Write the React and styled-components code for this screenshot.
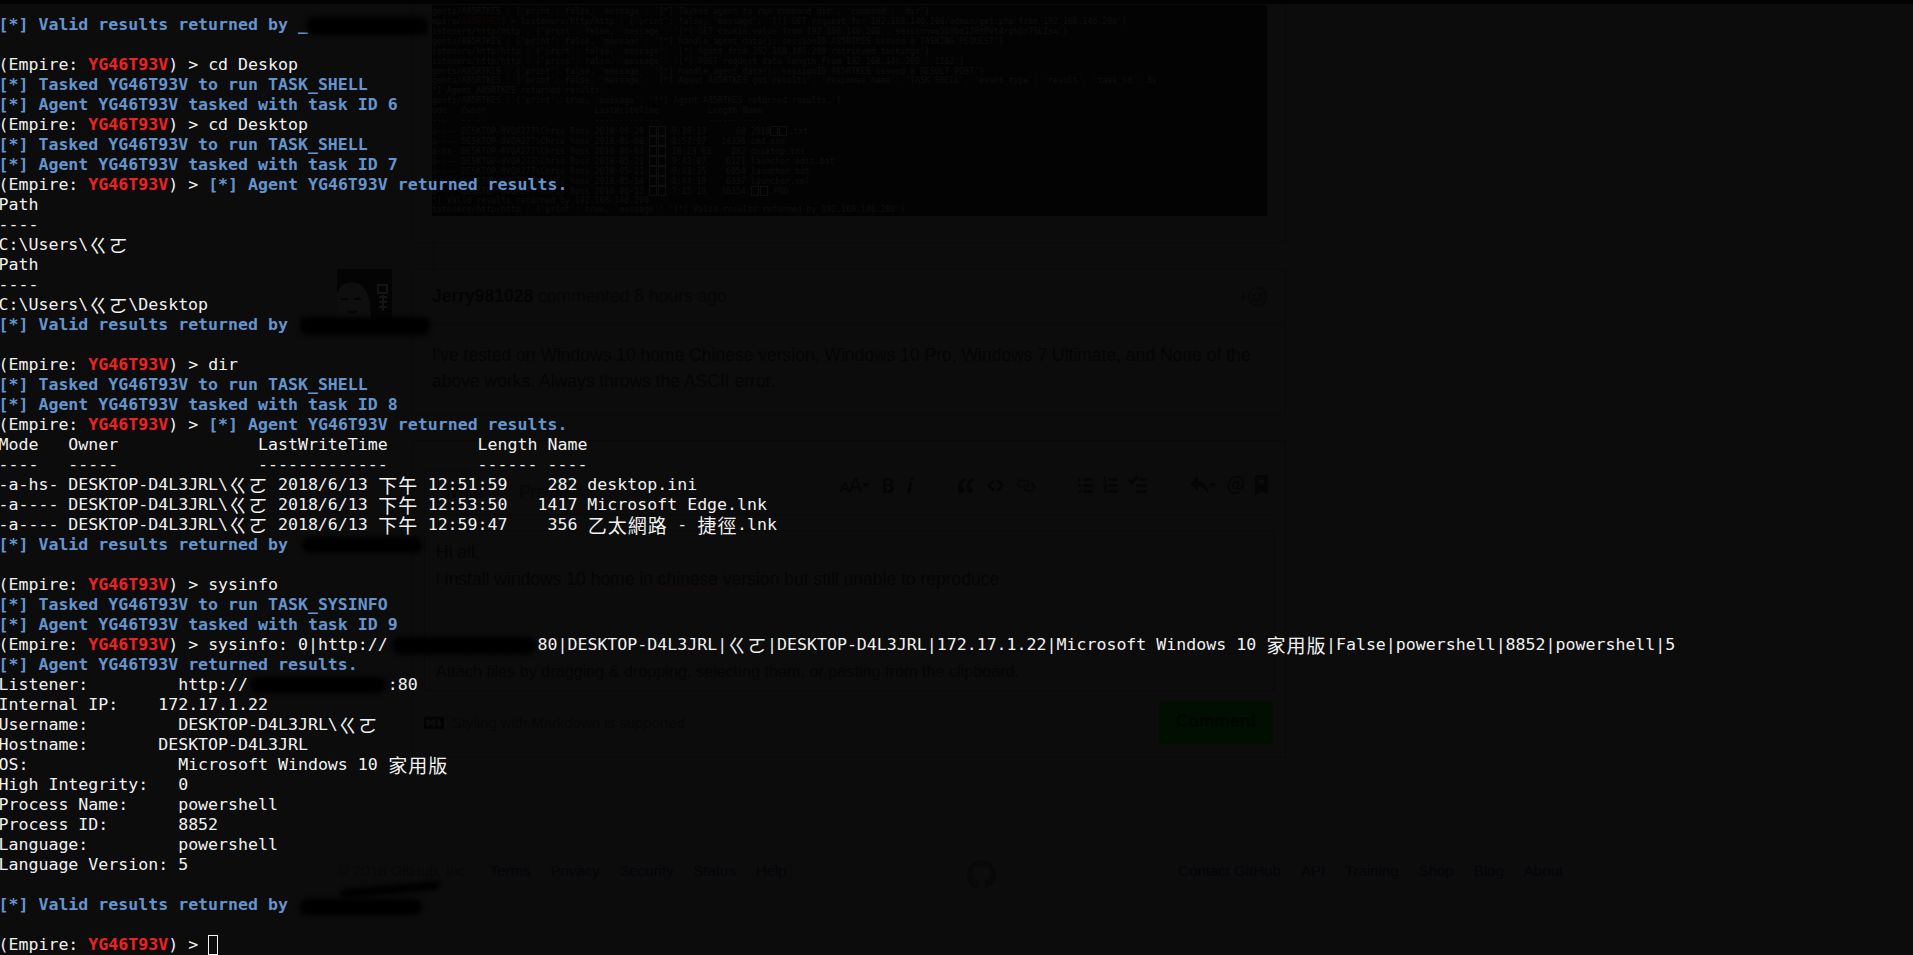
import React from "react";
import styled, { createGlobalStyle } from "styled-components";

const Global = createGlobalStyle`
  html, body { margin: 0; padding: 0; background: #0c0c0c; }
  #root { width: 1913px; height: 955px; overflow: hidden; }
`;

const Stage = styled.div`
  position: relative;
  width: 1913px;
  height: 955px;
  overflow: hidden;
  background: #0c0c0c;
  font-family: "Liberation Sans", Arial, sans-serif;
  color: #060606;
`;

/* ---------- dimmed GitHub page behind the terminal ---------- */
const Page = styled.div`
  display: flex;
  flex-direction: column;
  width: 950px;
  padding: 5px 0 0 337px;
`;
const TopStrip = styled.div`
  position: absolute;
  top: 0;
  left: 0;
  right: 0;
  height: 4px;
  background: #020202;
`;
const TopBox = styled.section`
  box-sizing: border-box;
  width: 874px;
  height: 238px;
  margin-left: 75px;
  padding: 0 18px 0 19px;
  border: 1px solid #090909;
  border-top: 0;
`;
const Shot = styled.div`
  width: 835px;
  height: 211px;
  overflow: hidden;
  background: #030303;
  padding-top: 2px;
  box-sizing: border-box;
`;
const ShotLine = styled.div`
  margin-left: -5px;
  height: 9.93px;
  white-space: pre;
  font: 8.2px/9.93px "DejaVu Sans Mono", monospace;
  color: #0f0f0f;
`;
const Tofu = styled.span`
  display: inline-block;
  box-sizing: border-box;
  width: 8px;
  height: 10px;
  margin-right: 1px;
  border: 1px solid #0f0f0f;
  vertical-align: -2px;
`;
const ShotRed = styled.span`
  color: #150303;
`;
const TimelineGap = styled.div`
  height: 26px;
  margin-left: 96px;
  border-left: 1px solid #090909;
`;
const CommentRow = styled.div`
  display: flex;
  gap: 20px;
`;
const AvatarBox = styled.div`
  width: 55px;
  height: 55px;
  flex: none;
`;
const Card = styled.article`
  box-sizing: border-box;
  width: 874px;
  height: 146px;
  border: 1px solid #090909;
`;
const CardHead = styled.header`
  box-sizing: border-box;
  height: 54px;
  padding: 0 18px 0 19px;
  display: flex;
  align-items: center;
  justify-content: space-between;
  border-bottom: 1px solid #090909;
  font-size: 17.5px;
  color: #070707;
`;
const Author = styled.strong`
  color: #040404;
`;
const Reaction = styled.div`
  display: flex;
  align-items: center;
  gap: 1px;
  color: #080808;
`;
const CardBody = styled.p`
  margin: 0;
  padding: 18px 19px 0;
  font-size: 17.5px;
  line-height: 26px;
  color: #050505;
`;
const FormFrame = styled.section`
  box-sizing: border-box;
  width: 874px;
  height: 318px;
  margin: 25px 0 0 75px;
  padding: 29px 10px 0 11px;
  border: 1px solid #090909;
`;
const TabBar = styled.div`
  box-sizing: border-box;
  height: 45px;
  display: flex;
  align-items: stretch;
  justify-content: space-between;
  border-bottom: 1px solid #090909;
`;
const Tabs = styled.div`
  display: flex;
`;
const Tab = styled.div`
  box-sizing: border-box;
  width: ${(p) => (p.$active ? "78px" : "96px")};
  display: flex;
  align-items: center;
  justify-content: center;
  font-size: 17.5px;
  color: #070707;
  border: ${(p) => (p.$active ? "1px solid #090909" : "0")};
  border-bottom: 0;
`;
const Toolbar = styled.div`
  display: flex;
  align-items: center;
  padding: 0 7px 14px 0;
  color: #050505;
`;
const ToolGroup = styled.div`
  display: flex;
  align-items: center;
  gap: ${(p) => p.$gap || 9}px;
  margin-left: ${(p) => p.$left || 0}px;
`;
const AaIcon = styled.span`
  display: inline-flex;
  align-items: baseline;
  font-size: 20px;
  letter-spacing: -1px;
`;
const SmallA = styled.span`
  font-size: 15px;
`;
const Caret = styled.span`
  width: 0;
  height: 0;
  margin: 0 0 0 1px;
  border: 4px solid transparent;
  border-top: 4px solid #050505;
  border-bottom: 0;
  align-self: center;
`;
const ToolItem = styled.span`
  display: inline-flex;
  align-items: center;
`;
const TextArea = styled.div`
  box-sizing: border-box;
  height: 122px;
  margin-top: 15px;
  padding: 8px 11px;
  border: 1px solid #090909;
  border-bottom: 0;
  font-size: 17.5px;
  line-height: 27px;
  color: #050505;
`;
const Misspelled = styled.span`
  text-decoration: underline wavy #1e0404 1px;
`;
const DropBar = styled.div`
  box-sizing: border-box;
  height: 39px;
  padding: 0 11px;
  display: flex;
  align-items: center;
  border: 1px solid #090909;
  border-top: 1px dashed #0a0a0a;
  border-radius: 0 0 3px 3px;
  font-size: 16.2px;
  color: #060606;
`;
const Actions = styled.div`
  display: flex;
  align-items: center;
  justify-content: space-between;
  margin-top: 11px;
  padding-right: 2px;
`;
const Note = styled.div`
  display: flex;
  align-items: center;
  gap: 8px;
  font-size: 14.9px;
  color: #070707;
`;
const NoteIcon = styled.span`
  display: inline-flex;
  color: #030303;
`;
const CommentButton = styled.div`
  box-sizing: border-box;
  width: 114px;
  height: 42px;
  padding-bottom: 4px;
  display: flex;
  align-items: center;
  justify-content: center;
  border-radius: 3px;
  background: #000f00;
  font-size: 17.5px;
  font-weight: 700;
  color: #030603;
`;
const Footer = styled.footer`
  width: 1225px;
  height: 30px;
  margin: 101px 0 0 1px;
  display: grid;
  grid-template-columns: 629px auto 1fr;
  align-items: center;
  font-size: 15px;
  color: #05050b;
`;
const FootLeft = styled.div`
  display: flex;
  gap: 19.8px;
  margin-bottom: 7px;
`;
const FootRight = styled.div`
  display: flex;
  justify-content: flex-end;
  gap: 20px;
  margin-bottom: 7px;
`;
const FootCopy = styled.span`
  color: #080808;
`;
const FootLogo = styled.span`
  display: inline-flex;
  color: #080808;
`;

/* ---------- the terminal on top ---------- */
const Terminal = styled.div`
  position: absolute;
  top: 15px;
  left: -1.5px;
  font-family: "DejaVu Sans Mono", "Liberation Mono", monospace;
  font-size: 16.58px;
  color: #f2f2f2;
`;
const Line = styled.div`
  height: 20px;
  line-height: 20px;
  white-space: pre;
`;
const Info = styled.span`
  color: #6595cd;
  font-weight: 700;
`;
const Red = styled.span`
  color: #ee2222;
  font-weight: 700;
`;
const Wide = styled.span`
  display: inline-block;
  width: 19.96px;
  text-align: center;
  font-family: "Noto Sans CJK TC", "Noto Sans CJK JP", sans-serif;
  font-size: 19px;
  line-height: 20px;
  height: 20px;
  vertical-align: top;
`;
const Cursor = styled.span`
  display: inline-block;
  width: 10px;
  height: 20px;
  border: 1px solid #f2f2f2;
  box-sizing: border-box;
  vertical-align: top;
`;
const Redaction = styled.div.attrs((p) => ({
  style: {
    left: p.$x,
    top: p.$y,
    width: p.$w,
    height: p.$h,
    transform: p.$tilt ? `rotate(${p.$tilt}deg)` : undefined,
  },
}))`
  position: absolute;
  background: #000;
  border-radius: 8px;
  filter: blur(2.5px);
`;

/* ---------- drawings ---------- */
const Oct = ({ w, h, vb, d }) => (
  <svg width={w} height={h} viewBox={vb} fill="currentColor" aria-hidden="true">
    <path fillRule="evenodd" d={d} />
  </svg>
);
const P = {
  bold: "M1 2h3.83c2.48 0 4.3.75 4.3 2.95 0 1.14-.63 2.23-1.67 2.61v.06c1.33.3 2.3 1.23 2.3 2.86 0 2.39-1.97 3.52-4.61 3.52H1V2zm3.66 4.95c1.67 0 2.38-.66 2.38-1.69 0-1.17-.78-1.61-2.34-1.61H3.13v3.3h1.53zm.27 5.39c1.77 0 2.75-.64 2.75-1.98 0-1.27-.95-1.81-2.75-1.81h-1.8v3.8h1.8v-.01z",
  italic: "M2.81 5h1.98L3 14H1l1.81-9zm.36-2.7c0-.7.58-1.3 1.33-1.3.56 0 1.13.38 1.13 1.03 0 .75-.59 1.3-1.33 1.3-.58 0-1.13-.38-1.13-1.03z",
  quote: "M6.16 3.5C3.73 5.06 2.55 6.67 2.55 9.36c.16-.05.3-.05.44-.05 1.27 0 2.5.86 2.5 2.41 0 1.61-1.03 2.61-2.5 2.61-1.9 0-2.99-1.52-2.99-4.25 0-3.8 1.75-6.53 5.02-8.42L6.16 3.5zm7 0c-2.43 1.56-3.61 3.17-3.61 5.86.16-.05.3-.05.44-.05 1.27 0 2.5.86 2.5 2.41 0 1.61-1.03 2.61-2.5 2.61-1.89 0-2.98-1.52-2.98-4.25 0-3.8 1.75-6.53 5.02-8.42l1.14 1.84h-.01z",
  code: "M9.5 3L8 4.5 11.5 8 8 11.5 9.5 13 14 8 9.5 3zm-5 0L0 8l4.5 5L6 11.5 2.5 8 6 4.5 4.5 3z",
  link: "M4 9h1v1H4c-1.5 0-3-1.69-3-3.5S2.55 3 4 3h4c1.45 0 3 1.69 3 3.5 0 1.41-.91 2.72-2 3.25V8.59c.58-.45 1-1.27 1-2.09C10 5.22 8.98 4 8 4H4c-.98 0-2 1.22-2 2.5S3 9 4 9zm9-3h-1v1h1c1 0 2 1.22 2 2.5S13.98 12 13 12H9c-.98 0-2-1.22-2-2.5 0-.83.42-1.64 1-2.09V6.25c-1.09.53-2 1.84-2 3.25C6 11.31 7.55 13 9 13h4c1.45 0 3-1.69 3-3.5S14.5 6 13 6z",
  ul: "M2 13c0 .59 0 1-.59 1H.59C0 14 0 13.59 0 13c0-.59 0-1 .59-1h.81c.59 0 .59.41.59 1H2zm2.59-9h6.81c.59 0 .59-.41.59-1 0-.59 0-1-.59-1H4.59C4 2 4 2.41 4 3c0 .59 0 1 .59 1zM1.41 7H.59C0 7 0 7.41 0 8c0 .59 0 1 .59 1h.81c.59 0 .59-.41.59-1 0-.59 0-1-.59-1h.01zm0-5H.59C0 2 0 2.41 0 3c0 .59 0 1 .59 1h.81c.59 0 .59-.41.59-1 0-.59 0-1-.59-1h.01zm10 5H4.59C4 7 4 7.41 4 8c0 .59 0 1 .59 1h6.81c.59 0 .59-.41.59-1 0-.59 0-1-.59-1h.01zm0 5H4.59C4 12 4 12.41 4 13c0 .59 0 1 .59 1h6.81c.59 0 .59-.41.59-1 0-.59 0-1-.59-1h.01z",
  ol: "M12.01 13c0 .59 0 1-.59 1H4.6c-.59 0-.59-.41-.59-1 0-.59 0-1 .59-1h6.81c.59 0 .59.41.59 1h.01zM4.6 4h6.81C12 4 12 3.59 12 3c0-.59 0-1-.59-1H4.6c-.59 0-.59.41-.59 1 0 .59 0 1 .59 1zm6.81 3H4.6c-.59 0-.59.41-.59 1 0 .59 0 1 .59 1h6.81c.59 0 .59-.41.59-1 0-.59 0-1-.59-1zM2 1h-.72c-.3.19-.58.25-1.03.34V2H1v2.14H.16V5H3v-.86H2V1zm.25 8.13c-.17 0-.45.03-.66.06.53-.56 1.14-1.25 1.14-1.89C2.71 6.52 2.17 6 1.37 6c-.59 0-.97.2-1.38.66l.5.5c.19-.19.38-.38.64-.38.28 0 .48.16.48.52 0 .53-.77 1.2-1.61 2.06V10h3v-.88h-.75v.01zm-.11 2.81v-.03c.44-.19.64-.47.64-.86 0-.7-.56-1.11-1.44-1.11-.48 0-.89.19-1.28.52l.55.64c.25-.2.44-.31.69-.31.27 0 .42.13.42.36 0 .27-.2.44-.86.44v.75c.83 0 .98.17.98.47 0 .25-.23.38-.58.38-.28 0-.56-.14-.81-.38l-.48.66c.3.36.77.56 1.41.56.83 0 1.53-.41 1.53-1.16 0-.5-.31-.81-.77-.94v.01z",
  task: "M15.41 9H7.59C7 9 7 8.59 7 8c0-.59 0-1 .59-1h7.81c.59 0 .59.41.59 1 0 .59 0 1-.59 1h.01zM9.59 4C9 4 9 3.59 9 3c0-.59 0-1 .59-1h5.81c.59 0 .59.41.59 1 0 .59 0 1-.59 1H9.59zM0 3.91l1.41-1.3L3 4.2 7.09 0 8.5 1.41 3 6.91l-3-3zM7.59 12h7.81c.59 0 .59.41.59 1 0 .59 0 1-.59 1H7.59C7 14 7 13.59 7 13c0-.59 0-1 .59-1z",
  reply: "M6 3.5c3.92.44 8 3.125 8 10-2.312-5.062-4.75-6-8-6V11L.5 5.5 6 0v3.5z",
  mention: "M6.58 15c1.25 0 2.52-.31 3.56-.94l-.42-.94c-.84.52-1.89.83-3.03.83-3.23 0-5.64-2.08-5.64-5.72 0-4.37 3.23-7.18 6.58-7.18 3.45 0 5.22 2.19 5.22 5.2 0 2.39-1.34 3.86-2.5 3.86-1.05 0-1.36-.73-1.05-2.19l.73-3.75H8.98l-.11.72c-.41-.63-.94-.83-1.56-.83-2.19 0-3.66 2.39-3.66 4.38 0 1.67.94 2.61 2.3 2.61.84 0 1.67-.53 2.3-1.25.11.94.94 1.45 1.98 1.45 1.67 0 3.77-1.67 3.77-5C14 2.61 11.59 0 7.83 0 3.66 0 0 3.33 0 8.33 0 12.71 2.92 15 6.58 15zm-.31-5c-.73 0-1.12-.52-1.12-1.45 0-1.36.94-3.02 2.2-3.02.42 0 .73.21 1.05.73l-.73 3.13c-.52.41-.94.61-1.4.61z",
  bookmark: "M9 0H1C.27 0 0 .27 0 1v15l5-3.25L10 16V1c0-.73-.27-1-1-1zm-.78 4.25L6.36 5.61l.72 2.16c.06.22-.02.28-.2.17L5 6.6 3.12 7.94c-.19.11-.25.05-.2-.17l.72-2.16-1.86-1.36c-.17-.16-.14-.23.09-.23l2.3-.03.7-2.16h.25l.7 2.16 2.3.03c.23 0 .27.08.09.23h.01z",
  md: "M14.85 3H1.15C.52 3 0 3.52 0 4.15v7.69C0 12.48.52 13 1.15 13h13.69c.64 0 1.15-.52 1.15-1.15v-7.7C16 3.52 15.48 3 14.85 3zM9 11H7V8L5.5 9.92 4 8v3H2V5h2l1.5 2L7 5h2v6zm2.99.5L9.5 8H11V5h2v3h1.5l-2.51 3.5z",
  github: "M8 0C3.58 0 0 3.58 0 8c0 3.54 2.29 6.53 5.47 7.59.4.07.55-.17.55-.38 0-.19-.01-.82-.01-1.49-2.01.37-2.53-.49-2.69-.94-.09-.23-.48-.94-.82-1.13-.28-.15-.68-.52-.01-.53.63-.01 1.08.58 1.23.82.72 1.21 1.87.87 2.33.66.07-.52.28-.87.51-1.07-1.78-.2-3.64-.89-3.64-3.95 0-.87.31-1.59.82-2.15-.08-.2-.36-1.02.08-2.12 0 0 .67-.21 2.2.82.64-.18 1.32-.27 2-.27.68 0 1.36.09 2 .27 1.53-1.04 2.2-.82 2.2-.82.44 1.1.16 1.92.08 2.12.51.56.82 1.27.82 2.15 0 3.07-1.87 3.75-3.65 3.95.29.25.54.73.54 1.48 0 1.07-.01 1.93-.01 2.2 0 .21.15.46.55.38A8.013 8.013 0 0 0 16 8c0-4.42-3.58-8-8-8z",
  smile: "M8 0C3.58 0 0 3.58 0 8s3.58 8 8 8 8-3.58 8-8-3.58-8-8-8zm4.81 12.81a6.72 6.72 0 0 1-2.17 1.45c-.83.36-1.72.53-2.64.53-.92 0-1.81-.17-2.64-.53-.81-.34-1.55-.83-2.17-1.45a6.773 6.773 0 0 1-1.45-2.17A6.59 6.59 0 0 1 1.21 8c0-.92.17-1.81.53-2.64.34-.81.83-1.55 1.45-2.17.62-.62 1.36-1.11 2.17-1.45A6.59 6.59 0 0 1 8 1.21c.92 0 1.81.17 2.64.53.81.34 1.55.83 2.17 1.45.62.62 1.11 1.36 1.45 2.17.36.83.53 1.72.53 2.64 0 .92-.17 1.81-.53 2.64-.34.81-.83 1.55-1.45 2.17zM4 6.8v-.59c0-.66.53-1.19 1.2-1.19h.59c.66 0 1.19.53 1.19 1.19v.59c0 .67-.53 1.2-1.19 1.2H5.2C4.53 8 4 7.47 4 6.8zm5 0v-.59c0-.66.53-1.19 1.2-1.19h.59c.66 0 1.19.53 1.19 1.19v.59c0 .67-.53 1.2-1.19 1.2h-.59C9.53 8 9 7.47 9 6.8zm4 3.2c-.72 1.88-2.91 3-5 3s-4.28-1.13-5-3c-.14-.39.23-1 .66-1h8.59c.41 0 .89.61.75 1z",
};

const Avatar = () => (
  <svg width="55" height="55" viewBox="0 0 55 55" aria-hidden="true">
    <rect width="55" height="55" fill="#040404" />
    <path d="M0 24C4 14 12 12 20 14c7 2 11 10 13 20l2 21H0z" fill="#0e0e0e" />
    <path d="M4 30h7M17 30h7M11 42c3 2 6 2 9 0" stroke="#040404" strokeWidth="2" fill="none" />
    <path d="M41 16h9v8h-9zM42 28h8M42 33h8M42 38h8M46 26v16" stroke="#141414" strokeWidth="2" fill="none" />
  </svg>
);

/* ---------- content ---------- */
const CJK = /([\u3100-\u312f\u3400-\u9fff])/;
const cells = (text) =>
  text.split(CJK).map((part, i) =>
    CJK.test(part) ? <Wide key={i}>{part}</Wide> : part
  );

const Prompt = () => (
  <>
    (Empire: <Red>YG46T93V</Red>) {">"}{" "}
  </>
);

const ID = "YG46T93V";
const termLines = [
  { info: "[*] Valid results returned by _" },
  {},
  { cmd: "cd Deskop" },
  { info: `[*] Tasked ${ID} to run TASK_SHELL` },
  { info: `[*] Agent ${ID} tasked with task ID 6` },
  { cmd: "cd Desktop" },
  { info: `[*] Tasked ${ID} to run TASK_SHELL` },
  { info: `[*] Agent ${ID} tasked with task ID 7` },
  { cmdInfo: `[*] Agent ${ID} returned results.` },
  { text: "Path" },
  { text: "----" },
  { text: "C:\\Users\\ㄍㄛ" },
  { text: "Path" },
  { text: "----" },
  { text: "C:\\Users\\ㄍㄛ\\Desktop" },
  { info: "[*] Valid results returned by " },
  {},
  { cmd: "dir" },
  { info: `[*] Tasked ${ID} to run TASK_SHELL` },
  { info: `[*] Agent ${ID} tasked with task ID 8` },
  { cmdInfo: `[*] Agent ${ID} returned results.` },
  { text: "Mode   Owner              LastWriteTime         Length Name" },
  { text: "----   -----              -------------         ------ ----" },
  { text: "-a-hs- DESKTOP-D4L3JRL\\ㄍㄛ 2018/6/13 下午 12:51:59    282 desktop.ini" },
  { text: "-a---- DESKTOP-D4L3JRL\\ㄍㄛ 2018/6/13 下午 12:53:50   1417 Microsoft Edge.lnk" },
  { text: "-a---- DESKTOP-D4L3JRL\\ㄍㄛ 2018/6/13 下午 12:59:47    356 乙太網路 - 捷徑.lnk" },
  { info: "[*] Valid results returned by " },
  {},
  { cmd: "sysinfo" },
  { info: `[*] Tasked ${ID} to run TASK_SYSINFO` },
  { info: `[*] Agent ${ID} tasked with task ID 9` },
  { cmd: "sysinfo: 0|http://               80|DESKTOP-D4L3JRL|ㄍㄛ|DESKTOP-D4L3JRL|172.17.1.22|Microsoft Windows 10 家用版|False|powershell|8852|powershell|5" },
  { info: `[*] Agent ${ID} returned results.` },
  { text: "Listener:         http://              :80" },
  { text: "Internal IP:    172.17.1.22" },
  { text: "Username:         DESKTOP-D4L3JRL\\ㄍㄛ" },
  { text: "Hostname:       DESKTOP-D4L3JRL" },
  { text: "OS:               Microsoft Windows 10 家用版" },
  { text: "High Integrity:   0" },
  { text: "Process Name:     powershell" },
  { text: "Process ID:       8852" },
  { text: "Language:         powershell" },
  { text: "Language Version: 5" },
  {},
  { info: "[*] Valid results returned by " },
  {},
  { cursor: true },
];

const A = "agents/A85RTKES : {'print': ";
const L = "listeners/http/http : {'print': ";
const O = "DESKTOP-8VQA277\\Chris Ross";
const shotLines = [
  [`${A}false, 'message': '[*] Tasked agent to run command dir', 'command': 'dir'}`],
  ["empire/", <ShotRed key="r">A85RTKES</ShotRed>, ") > listeners/http/http : {'print': false, 'message': '[!] GET request for 192.168.146.200/admin/get.php from 192.168.146.200'}"],
  [`${L}false, 'message': '[*] GET cookie value from 192.168.146.200 : session=a56Ybd1J8tRVt4rphOr7SLIs='}`],
  [`${A}false, 'message': '[*] handle_agent_data(): sessionID A85RTKES issued a TASKING_REQUEST'}`],
  [`${L}false, 'message': '[*] Agent from 192.168.146.200 retrieved taskings'}`],
  [`${L}false, 'message': '[*] POST request data length from 192.168.146.200 : 1162'}`],
  [`${A}false, 'message': '[*] handle_agent_data(): sessionID A85RTKES issued a RESULT_POST'}`],
  [`${A}false, 'message': '[*] Agent A85RTKES got results', 'response_name': 'TASK_SHELL', 'event_type': 'result', 'task_id': 3}`],
  ["[*] Agent A85RTKES returned results."],
  [`${A}true, 'message': '[*] Agent A85RTKES returned results.'}`],
  ["Mode   Owner                      LastWriteTime          Length Name"],
  ["----   -----                      -------------          ------ ----"],
  [`-a---- ${O} 2018-06-28 `, <Tofu key="a" />, <Tofu key="b" />, " 9:18:13      68 2018", <Tofu key="c" />, <Tofu key="d" />, ".txt"],
  [`-a---- ${O} 2018-06-08 `, <Tofu key="a" />, <Tofu key="b" />, " 8:57:07   14336 cmd.exe"],
  [`-a-hs- ${O} 2018-06-04 `, <Tofu key="a" />, <Tofu key="b" />, " 10:23:03    282 desktop.ini"],
  [`-a---- ${O} 2018-05-21 `, <Tofu key="a" />, <Tofu key="b" />, " 9:43:07    6121 launcher-edit.bat"],
  [`-a---- ${O} 2018-05-21 `, <Tofu key="a" />, <Tofu key="b" />, " 9:43:35    6054 launcher.bat"],
  [`-a---- ${O} 2018-05-14 `, <Tofu key="a" />, <Tofu key="b" />, " 8:44:19    6337 launcher.xml"],
  [`-a---- ${O} 2018-06-12 `, <Tofu key="a" />, <Tofu key="b" />, " 7:15:19   36354 ", <Tofu key="c" />, <Tofu key="d" />, ".PNG"],
  ["[*] Valid results returned by 192.168.146.200"],
  [`${L}true, 'message': '[*] Valid results returned by 192.168.146.200'}`],
];

const redactions = [
  { x: 306, y: 17, w: 122, h: 18 },
  { x: 300, y: 317, w: 130, h: 18 },
  { x: 302, y: 537, w: 120, h: 16 },
  { x: 392, y: 637, w: 144, h: 17 },
  { x: 250, y: 677, w: 136, h: 16 },
  { x: 300, y: 899, w: 122, h: 16 },
  { x: 340, y: 885, w: 100, h: 9, tilt: -5 },
];

export default function App() {
  return (
    <Stage>
      <Global />
      <TopStrip />
      <Page>
        <TopBox>
          <Shot>
            {shotLines.map((l, i) => (
              <ShotLine key={i}>{l}</ShotLine>
            ))}
          </Shot>
        </TopBox>
        <TimelineGap />
        <CommentRow>
          <AvatarBox>
            <Avatar />
          </AvatarBox>
          <Card>
            <CardHead>
              <span>
                <Author>Jerry981028</Author> commented 8 hours ago
              </span>
              <Reaction>
                <Oct w={8} h={16} vb="0 0 10 16" d="M4 3h2v4h4v2H6v4H4V9H0V7h4z" />
                <Oct w={19} h={19} vb="0 0 16 16" d={P.smile} />
              </Reaction>
            </CardHead>
            <CardBody>
              I've tested on Windows 10 home Chinese version, Windows 10 Pro, Windows 7 Ultimate, and None of the
              above works. Always throws the ASCII error.
            </CardBody>
          </Card>
        </CommentRow>
        <FormFrame>
          <TabBar>
            <Tabs>
              <Tab $active>Write</Tab>
              <Tab>Preview</Tab>
            </Tabs>
            <Toolbar>
              <ToolGroup $gap={12}>
                <ToolItem>
                  <AaIcon>
                    <SmallA>A</SmallA>A
                  </AaIcon>
                  <Caret />
                </ToolItem>
                <Oct w={12} h={19} vb="0 0 10 16" d={P.bold} />
                <Oct w={8} h={19} vb="0 0 6 16" d={P.italic} />
              </ToolGroup>
              <ToolGroup $left={44} $gap={12}>
                <Oct w={17} h={19} vb="0 0 14 16" d={P.quote} />
                <Oct w={17} h={19} vb="0 0 14 16" d={P.code} />
                <Oct w={19} h={19} vb="0 0 16 16" d={P.link} />
              </ToolGroup>
              <ToolGroup $left={43} $gap={10}>
                <Oct w={15} h={19} vb="0 0 12 16" d={P.ul} />
                <Oct w={15} h={19} vb="0 0 12 16" d={P.ol} />
                <Oct w={19} h={19} vb="0 0 16 16" d={P.task} />
              </ToolGroup>
              <ToolGroup $left={43} $gap={10}>
                <ToolItem>
                  <Oct w={18} h={19} vb="0 0 14 14" d={P.reply} />
                  <Caret />
                </ToolItem>
                <Oct w={18} h={19} vb="0 0 14 16" d={P.mention} />
                <Oct w={13} h={20} vb="0 0 10 16" d={P.bookmark} />
              </ToolGroup>
            </Toolbar>
          </TabBar>
          <TextArea>
            Hi all,
            <br />i install windows 10 home in <Misspelled>chinese</Misspelled> version but still unable to reproduce
          </TextArea>
          <DropBar>Attach files by dragging &amp; dropping, selecting them, or pasting from the clipboard.</DropBar>
          <Actions>
            <Note>
              <NoteIcon>
                <Oct w={20} h={20} vb="0 0 16 16" d={P.md} />
              </NoteIcon>
              Styling with Markdown is supported
            </Note>
            <CommentButton>Comment</CommentButton>
          </Actions>
        </FormFrame>
        <Footer>
          <FootLeft>
            <FootCopy>© 2018 GitHub, Inc.</FootCopy>
            <span>Terms</span>
            <span>Privacy</span>
            <span>Security</span>
            <span>Status</span>
            <span>Help</span>
          </FootLeft>
          <FootLogo>
            <Oct w={29} h={29} vb="0 0 16 16" d={P.github} />
          </FootLogo>
          <FootRight>
            <span>Contact GitHub</span>
            <span>API</span>
            <span>Training</span>
            <span>Shop</span>
            <span>Blog</span>
            <span>About</span>
          </FootRight>
        </Footer>
      </Page>
      <Terminal>
        {termLines.map((l, i) => (
          <Line key={i}>
            {l.info && <Info>{l.info}</Info>}
            {l.text && cells(l.text)}
            {l.cmd && (
              <>
                <Prompt />
                {cells(l.cmd)}
              </>
            )}
            {l.cmdInfo && (
              <>
                <Prompt />
                <Info>{l.cmdInfo}</Info>
              </>
            )}
            {l.cursor && (
              <>
                <Prompt />
                <Cursor />
              </>
            )}
          </Line>
        ))}
      </Terminal>
      {redactions.map((r, i) => (
        <Redaction key={i} $x={r.x} $y={r.y} $w={r.w} $h={r.h} $tilt={r.tilt} />
      ))}
    </Stage>
  );
}
